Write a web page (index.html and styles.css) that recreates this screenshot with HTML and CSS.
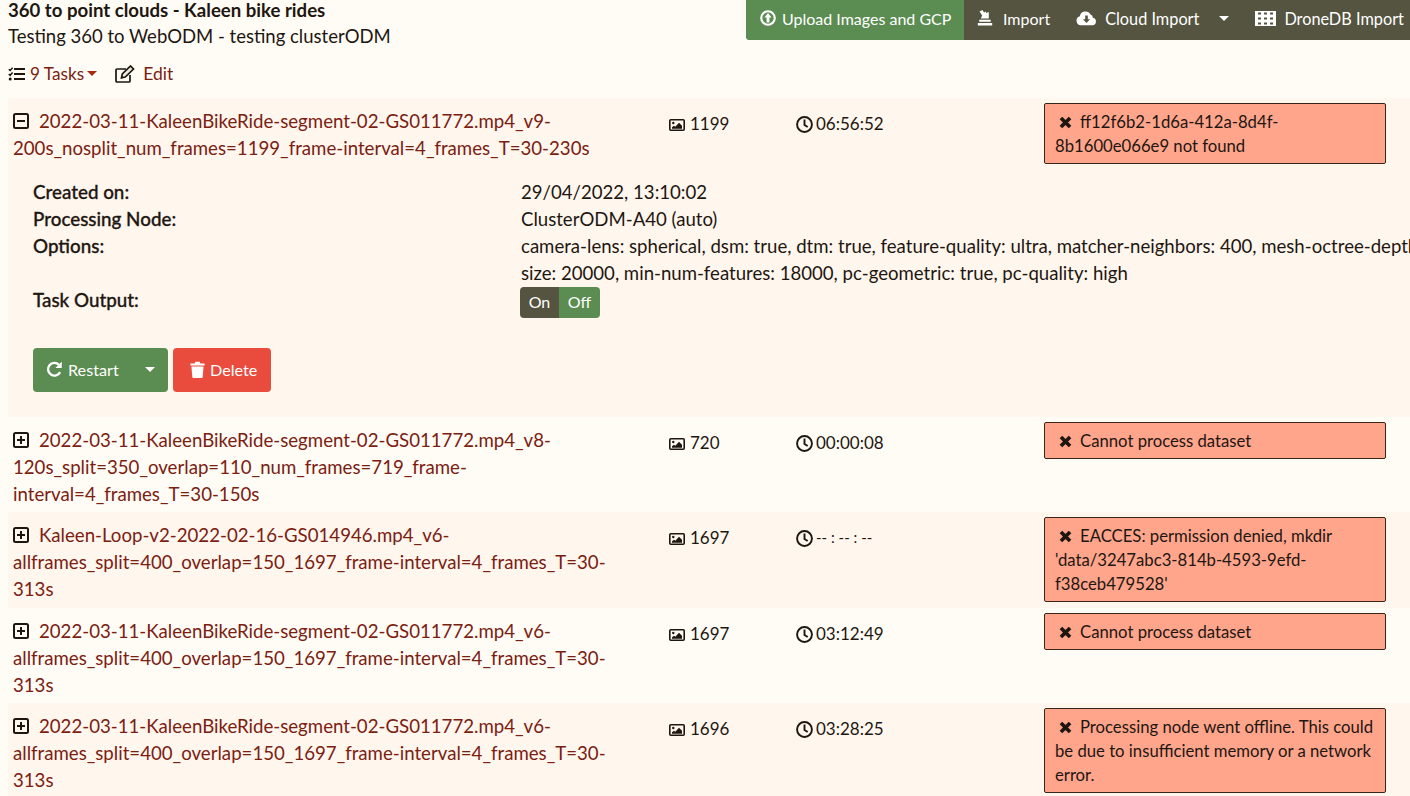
FILE: index.html
```html
<!DOCTYPE html>
<html lang="en">
<head>
<meta charset="utf-8">
<title>360 to point clouds - Kaleen bike rides</title>
<link rel="stylesheet" href="styles.css">
</head>
<body>
<svg class="defs" width="0" height="0" aria-hidden="true">
  <defs>
    <symbol id="i-plus" viewBox="0 0 16 16"><rect x="1" y="1" width="14" height="14" rx="1.500" fill="none" stroke="currentColor" stroke-width="2"/><path d="M4 8h8M8 4v8" stroke="currentColor" stroke-width="2" fill="none"/></symbol>
    <symbol id="i-minus" viewBox="0 0 16 16"><rect x="1" y="1" width="14" height="14" rx="1.500" fill="none" stroke="currentColor" stroke-width="2"/><path d="M4 8h8" stroke="currentColor" stroke-width="2" fill="none"/></symbol>
    <symbol id="i-image" viewBox="0 0 16 12"><rect x=".8" y=".8" width="14.400" height="10.400" rx="1" fill="none" stroke="currentColor" stroke-width="1.600"/><circle cx="4.300" cy="4" r="1.200" fill="currentColor"/><path d="M3 9.800V8.200l2-1.500 1.300 1L10 3.800l3 3v3z" fill="currentColor"/></symbol>
    <symbol id="i-clock" viewBox="0 0 16 16"><circle cx="8" cy="8" r="7" fill="none" stroke="currentColor" stroke-width="1.800"/><path d="M8 3.400V8.400l3 2" fill="none" stroke="currentColor" stroke-width="1.800"/></symbol>
    <symbol id="i-x" viewBox="0 0 12 12"><path d="M1.800 1.800l8.400 8.400M10.200 1.800l-8.400 8.400" stroke="currentColor" stroke-width="3.400" fill="none"/></symbol>
  </defs>
</svg>

<header class="project-head">
  <div class="project-title">
    <div class="title">360 to point clouds - Kaleen bike rides</div>
    <div class="subtitle">Testing 360 to WebODM - testing clusterODM</div>
  </div>
  <nav class="actions">
    <a class="action action-green">
      <svg class="a-icon" viewBox="0 0 16 16"><circle cx="8" cy="8" r="7.800" fill="currentColor"/><circle cx="8" cy="8" r="5.700" fill="#5b8c51"/><path d="M8 3L11.600 7.400H9.400V12.500H6.600V7.400H4.400z" fill="currentColor"/></svg>
      Upload Images and GCP
    </a>
    <a class="action action-import">
      <svg class="a-icon" viewBox="0 0 16 16"><path d="M2.500 1.500l3-1.500 1.500 2.500 2-1v1.500l2.800-1V8.600H3.800L5.200 5.400z" fill="currentColor"/><path d="M2.200 9.800h11.500v2H2.200zM.8 13h14.400v2.600H.8z" fill="currentColor"/></svg>
      Import
    </a>
    <a class="action action-cloud">
      <svg class="a-icon a-icon-wide" viewBox="0 0 21 16"><path d="M5 15.300A4.600 4.600 0 0 1 3.800 6.300 5.700 5.700 0 0 1 14.500 4.600a3.300 3.300 0 0 1 2.400 3.200A3.800 3.800 0 0 1 16.500 15.300z" fill="currentColor"/><path d="M9.200 5.500h2.600v3.700h2.300L10.500 13 6.900 9.200h2.300z" fill="#545440"/></svg>
      Cloud Import
      <span class="caret caret-gap"></span>
    </a>
    <a class="action action-db">
      <svg class="a-icon a-icon-wide" viewBox="0 0 21 15"><path fill="currentColor" d="M0 0h21v15H0z"/><path fill="#545440" d="M3 1.500h3v2H3zM9 1.500h3v2H9zM15 1.500h3v2h-3zM3 6.500h3v2H3zM9 6.500h3v2H9zM15 6.500h3v2h-3zM3 11.500h3v2H3zM9 11.500h3v2H9zM15 11.500h3v2h-3z"/></svg>
      DroneDB Import
    </a>
  </nav>
</header>

<div class="toolbar">
  <a class="tool">
    <svg class="tool-icon tool-list" viewBox="0 0 17 14"><path d="M.8 2.200l1.300 1.300L4.600.8M.8 7l1.300 1.300L4.600 5.600" stroke="currentColor" stroke-width="1.500" fill="none"/><circle cx="2.200" cy="12" r="1.500" fill="currentColor"/><path d="M6 1.100h11v1.800H6zM6 6.100h11v1.800H6zM6 11.100h11v1.800H6z" fill="currentColor"/></svg>
    <span>9 Tasks</span><span class="caret caret-link"></span>
  </a>
  <a class="tool tool-edit">
    <svg class="tool-icon tool-pen" viewBox="0 0 20 18"><path d="M15 10v6a1 1 0 0 1-1 1H2a1 1 0 0 1-1-1V5a1 1 0 0 1 1-1h9" fill="none" stroke="currentColor" stroke-width="1.700"/><path d="M6.500 12.800l.8-3.800L15.500 1l3 3-8.200 8z" fill="#f2e9df" stroke="currentColor" stroke-width="1.700"/></svg>
    Edit
  </a>
</div>

<main class="tasks">
  <section class="task task-alt">
    <div class="task-head">
      <div class="task-name"><svg class="toggle"><use href="#i-minus"/></svg><a>2022-03-11-KaleenBikeRide-segment-02-GS011772.mp4_v9-200s_nosplit_num_frames=1199_frame-interval=4_frames_T=30-230s</a></div>
      <div class="task-stat"><svg class="stat-img"><use href="#i-image"/></svg>1199</div>
      <div class="task-stat"><svg class="stat-clock"><use href="#i-clock"/></svg>06:56:52</div>
      <div class="alert"><svg class="alert-x"><use href="#i-x"/></svg>ff12f6b2-1d6a-412a-8d4f-8b1600e066e9 not found</div>
    </div>
    <div class="details">
      <div class="detail-label">Created on:</div><div>29/04/2022, 13:10:02</div>
      <div class="detail-label">Processing Node:</div><div>ClusterODM-A40 (auto)</div>
      <div class="detail-label">Options:</div><div class="detail-options">camera-lens: spherical, dsm: true, dtm: true, feature-quality: ultra, matcher-neighbors: 400, mesh-octree-depth: 11, mesh-size: 20000, min-num-features: 18000, pc-geometric: true, pc-quality: high</div>
      <div class="detail-label">Task Output:</div>
      <div class="switch"><span class="switch-on">On</span><span class="switch-off">Off</span></div>
    </div>
    <div class="task-buttons">
      <button class="btn btn-green">
        <svg class="btn-icon" viewBox="0 0 16 16"><path d="M13.300 10.500A6 6 0 1 1 12.200 3.500" fill="none" stroke="currentColor" stroke-width="2.200"/><path d="M14.800.6v6H8.800z" fill="currentColor"/></svg>
        Restart
        <span class="caret caret-btn"></span>
      </button>
      <button class="btn btn-red">
        <svg class="btn-icon btn-icon-trash" viewBox="0 0 14 16"><path d="M.3 2.400h4L5 .6h4l.7 1.800h4v1.800H.3zM1.300 5.200h11.400l-.8 9.800a1 1 0 0 1-1 1H3.100a1 1 0 0 1-1-1z" fill="currentColor"/></svg>
        Delete
      </button>
    </div>
  </section>

  <section class="task">
    <div class="task-head">
      <div class="task-name"><svg class="toggle"><use href="#i-plus"/></svg><a>2022-03-11-KaleenBikeRide-segment-02-GS011772.mp4_v8-120s_split=350_overlap=110_num_frames=719_frame-interval=4_frames_T=30-150s</a></div>
      <div class="task-stat"><svg class="stat-img"><use href="#i-image"/></svg>720</div>
      <div class="task-stat"><svg class="stat-clock"><use href="#i-clock"/></svg>00:00:08</div>
      <div class="alert"><svg class="alert-x"><use href="#i-x"/></svg>Cannot process dataset</div>
    </div>
  </section>

  <section class="task task-alt">
    <div class="task-head">
      <div class="task-name"><svg class="toggle"><use href="#i-plus"/></svg><a>Kaleen-Loop-v2-2022-02-16-GS014946.mp4_v6-allframes_split=400_overlap=150_1697_frame-interval=4_frames_T=30-313s</a></div>
      <div class="task-stat"><svg class="stat-img"><use href="#i-image"/></svg>1697</div>
      <div class="task-stat"><svg class="stat-clock"><use href="#i-clock"/></svg><span class="no-time">-- : -- : --</span></div>
      <div class="alert"><svg class="alert-x"><use href="#i-x"/></svg>EACCES: permission denied, mkdir 'data/3247abc3-814b-4593-9efd-f38ceb479528'</div>
    </div>
  </section>

  <section class="task">
    <div class="task-head">
      <div class="task-name"><svg class="toggle"><use href="#i-plus"/></svg><a>2022-03-11-KaleenBikeRide-segment-02-GS011772.mp4_v6-allframes_split=400_overlap=150_1697_frame-interval=4_frames_T=30-313s</a></div>
      <div class="task-stat"><svg class="stat-img"><use href="#i-image"/></svg>1697</div>
      <div class="task-stat"><svg class="stat-clock"><use href="#i-clock"/></svg>03:12:49</div>
      <div class="alert"><svg class="alert-x"><use href="#i-x"/></svg>Cannot process dataset</div>
    </div>
  </section>

  <section class="task task-alt">
    <div class="task-head">
      <div class="task-name"><svg class="toggle"><use href="#i-plus"/></svg><a>2022-03-11-KaleenBikeRide-segment-02-GS011772.mp4_v6-allframes_split=400_overlap=150_1697_frame-interval=4_frames_T=30-313s</a></div>
      <div class="task-stat"><svg class="stat-img"><use href="#i-image"/></svg>1696</div>
      <div class="task-stat"><svg class="stat-clock"><use href="#i-clock"/></svg>03:28:25</div>
      <div class="alert"><svg class="alert-x"><use href="#i-x"/></svg>Processing node went offline. This could be due to insufficient memory or a network error.</div>
    </div>
  </section>
</main>
</body>
</html>
```

FILE: styles.css
```css
* { box-sizing: border-box; }

html, body {
  height: 796px;
  overflow: hidden;
}

body {
  margin: 0;
  width: 1410px;
  background: #fffcf6;
  color: #1e1610;
  font-family: Lato, "Noto Sans", sans-serif;
  font-size: 18.600px;
  line-height: 27px;
}

.defs { display: block; height: 0; }

a { color: #7b2011; }

.project-head {
  display: flex;
  justify-content: space-between;
  align-items: flex-start;
  padding-left: 8px;
  height: 56px;
}

.title {
  font-weight: 700;
  line-height: 20px;
}

.subtitle {
  margin-top: 3px;
  font-size: 18.500px;
}

.actions {
  display: flex;
  flex: none;
  width: 664px;
  height: 40px;
  background: #545440;
  border-bottom-left-radius: 4px;
  overflow: hidden;
  color: #fff;
  font-size: 16px;
  white-space: nowrap;
}

.action {
  display: flex;
  align-items: center;
  gap: 8px;
  height: 36px;
  padding: 0 13px;
  color: #fff;
}

.action-green {
  background: #5b8c51;
  width: 218px;
  height: 40px;
  gap: 6px;
  padding: 0 0 4px 14px;
}

.action-import { gap: 10px; }
.action-cloud { padding-right: 13px; font-size: 16.300px; }
.action-db { padding-right: 0; font-size: 16.300px; }

.a-icon { width: 16px; height: 16px; flex: none; }
.a-icon-wide { width: 21px; }
.action-db .a-icon-wide { height: 15px; }

.caret {
  display: inline-block;
  width: 0;
  height: 0;
  border-left: 5px solid transparent;
  border-right: 5px solid transparent;
  border-top: 5px solid currentColor;
}

.caret-gap { margin-left: 12px; }
.caret-link { margin-left: -2px; border-top-color: #a82a0e; }

.toolbar {
  display: flex;
  align-items: center;
  gap: 18px;
  height: 35px;
  padding-left: 8px;
  font-size: 17.200px;
}

.tool { display: flex; align-items: center; gap: 5px; }
.tool-edit { gap: 8px; font-size: 17.500px; }
.tool-icon { color: #1e1610; flex: none; }
.tool-list { width: 17px; height: 14px; }
.tool-pen { width: 20px; height: 18px; }

.tasks {
  margin-top: 7px;
  margin-left: 8px;
}

.task { background: #fffcf6; }
.task-alt { background: #fff6ee; }

.task-head {
  display: grid;
  grid-template-columns: 661px 127px 248px 342px;
  padding-top: 5px;
}

.task-name {
  padding: 5px 50px 4.400px 5px;
  font-size: 18.650px;
  overflow-wrap: anywhere;
}

.toggle {
  width: 16px;
  height: 16px;
  margin-right: 10px;
  vertical-align: -1px;
}

.task-stat {
  padding-top: 7px;
  font-size: 17px;
  white-space: nowrap;
}

.stat-img {
  width: 16px;
  height: 12px;
  margin-right: 5px;
  vertical-align: -1px;
}

.stat-clock {
  width: 17px;
  height: 17px;
  margin-right: 3px;
  vertical-align: -3px;
}

.no-time { font-size: 15px; vertical-align: 1px; }

.alert {
  align-self: start;
  padding: 6px 10px 5px;
  border: 1px solid #3a2417;
  border-radius: 2px;
  background: #ffa58c;
  font-size: 16.700px;
  line-height: 24px;
  margin-bottom: 5px;
}

.alert-x {
  width: 13px;
  height: 13px;
  margin: 0 8px 0 4px;
  vertical-align: -1px;
}

.details {
  display: grid;
  grid-template-columns: 488px 1020px;
  padding: 10px 0 0 25px;
}

.detail-label {
  font-size: 18.800px;
  line-height: 25px;
  font-weight: 500;
  -webkit-text-stroke: 0.300px currentColor;
}

.switch {
  display: flex;
  width: 80px;
  height: 31px;
  margin-left: -1px;
  border-radius: 4px;
  overflow: hidden;
  color: #fff;
  font-size: 16px;
  line-height: 30px;
  text-align: center;
}

.switch-on { width: 39px; background: #545440; }
.switch-off { width: 41px; background: #5b8c51; }

.task-buttons {
  display: flex;
  gap: 5px;
  padding: 30px 0 25px 25px;
}

.btn {
  display: flex;
  align-items: center;
  height: 44px;
  border: 0;
  border-radius: 4px;
  color: #fff;
  font-family: inherit;
  font-size: 16.200px;
}

.btn-green { width: 135px; padding: 0 13px 2px; background: #5b8c51; }
.btn-red { width: 98px; padding: 0 13px 2px 17px; background: #e94b3c; }

.btn-icon { width: 17px; height: 17px; margin-right: 5px; flex: none; }
.btn-icon-trash { width: 15px; height: 17px; margin-right: 5px; }

.caret-btn { margin-left: 26px; }
```
